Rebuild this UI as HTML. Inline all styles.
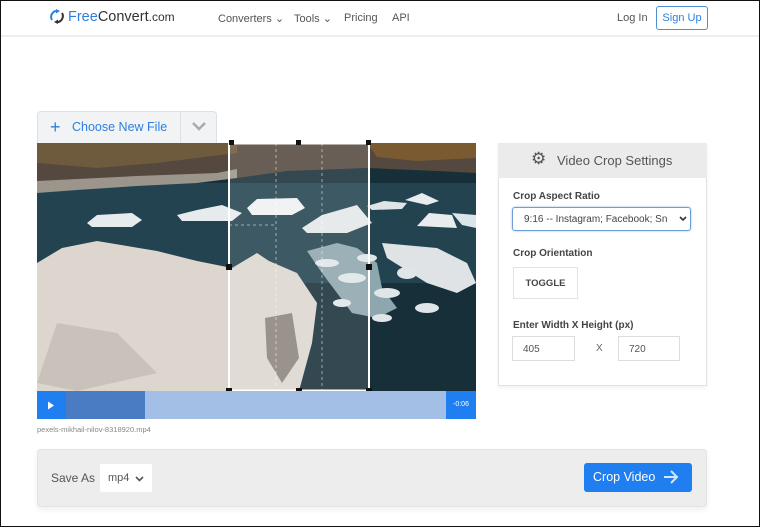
<!DOCTYPE html>
<html><head><meta charset="utf-8"><style>
*{box-sizing:border-box;margin:0;padding:0}
body{width:760px;height:527px;background:#fff;font-family:"Liberation Sans",Arial,sans-serif;position:relative;overflow:hidden}
.frame{position:absolute;left:0;top:0;width:760px;height:527px;border:1px solid #111;pointer-events:none;z-index:10}
.hdr{position:absolute;left:0;top:0;width:760px;height:37px;border-bottom:2px solid #eceef1;background:#fff}
.a{position:absolute;font-size:11px;color:#555;top:12px}
.abs{position:absolute}
</style></head><body>
<div class="hdr">
 <svg class="abs" style="left:49px;top:8px" width="16" height="17" viewBox="0 0 16 17"><path d="M3 12 A6 6 0 0 1 9 3" fill="none" stroke="#2d7fe0" stroke-width="2"/><path d="M7 1 L11 3 L7 5.5Z" fill="#2d7fe0"/><path d="M13 5 A6 6 0 0 1 7 14" fill="none" stroke="#333" stroke-width="2"/><path d="M9 16 L5 14 L9 11.5Z" fill="#333"/></svg>
 <div class="abs" style="left:68px;top:9px;font-size:14.5px;color:#333"><span style="color:#2d7fe0">Free</span>Convert<span style="font-size:12px">.com</span></div>
 <div class="a" style="left:218px">Converters ⌄</div>
 <div class="a" style="left:294px">Tools ⌄</div>
 <div class="a" style="left:344px">Pricing</div>
 <div class="a" style="left:392px">API</div>
 <div class="a" style="left:617px">Log In</div>
 <div class="abs" style="left:656px;top:6px;width:52px;height:24px;border:1px solid #4d8fd6;border-radius:3px;color:#2d7fe0;font-size:11px;text-align:center;line-height:22px">Sign Up</div>
</div>

<div class="abs" style="left:37px;top:111px;width:180px;height:33px;background:#f1f3f5;border:1px solid #dde1e5;border-bottom:none;border-radius:4px 4px 0 0"></div>
<div class="abs" style="left:180px;top:111px;width:1px;height:32px;background:#dde1e5"></div>
<div class="abs" style="left:50px;top:117px;font-size:18px;color:#2d7fe0">+</div>
<div class="abs" style="left:72px;top:120px;font-size:12.5px;color:#2d7fe0">Choose New File</div>
<svg class="abs" style="left:192px;top:122px" width="14" height="9"><path d="M1 1 L7 7 L13 1" fill="none" stroke="#aaa" stroke-width="2.5"/></svg>

<svg class="abs" style="left:37px;top:143px" width="439" height="248" viewBox="0 0 439 248">
 <rect width="439" height="248" fill="#172f39"/>
 <rect width="439" height="100" y="40" fill="#22434f"/>
 <path d="M0 0H439V30L400 28 330 25 250 28 200 35 160 38 100 42 40 45 0 48Z" fill="#54483f"/>
 <path d="M0 0H200V10L120 20 60 25 0 20Z" fill="#6e5a3c"/>
 <path d="M330 0H439V15L380 18 340 14Z" fill="#7a5a30"/>
 <path d="M0 38 L100 33 180 30 200 26 200 35 160 40 100 43 40 47 0 50Z" fill="#9b958c"/>
 <path d="M50 80 L60 72 95 70 105 77 95 84 55 84Z" fill="#e6ebed"/>
 <path d="M140 72 L160 67 185 62 205 70 195 78 145 78Z" fill="#e6ebed"/>
 <path d="M210 65 L220 56 260 55 268 65 255 72 215 72Z" fill="#eef1f3"/>
 <path d="M265 85 L285 72 320 62 335 80 310 90 270 90Z" fill="#e3e7e9"/>
 <path d="M330 63 L347 58 370 60 365 66 335 67Z" fill="#dfe4e7"/>
 <path d="M368 57 L385 50 402 58 390 62Z" fill="#e8ecee"/>
 <path d="M380 83 L392 70 415 72 420 85Z" fill="#e8ecee"/>
 <path d="M415 70 L439 72 439 85 425 82Z" fill="#dbe4ea"/>
 <path d="M345 100 L400 105 430 120 439 140 420 150 390 140 350 115Z" fill="#dfe3e5"/>
 <path d="M270 108 L300 100 320 105 340 120 345 145 360 165 340 175 315 170 300 150 285 130Z" fill="#8ea6ae"/>
 <g fill="#e0e6e8"><ellipse cx="290" cy="120" rx="12" ry="4"/><ellipse cx="315" cy="135" rx="14" ry="5"/><ellipse cx="330" cy="115" rx="10" ry="4"/><ellipse cx="350" cy="150" rx="13" ry="5"/><ellipse cx="305" cy="160" rx="9" ry="4"/><ellipse cx="370" cy="130" rx="10" ry="6"/><ellipse cx="345" cy="175" rx="10" ry="4"/><ellipse cx="390" cy="165" rx="12" ry="5"/></g>
 <path d="M0 120 L25 105 60 98 120 108 160 118 195 125 220 110 232 118 260 130 280 160 275 200 262 248 0 248Z" fill="#dcd6cf"/>
 <path d="M20 180 L80 190 120 230 40 248 0 240Z" fill="#c9c2ba"/>
 <path d="M228 175 L255 170 262 215 245 240 230 215Z" fill="#8c847c"/>
 <rect x="192" y="0" width="140" height="248" fill="#fff" opacity="0.12"/>
 <path d="M239 0V248M285 0V248M192 82H239" stroke="#fff" stroke-dasharray="3 3" opacity="0.5" fill="none"/>
 <rect x="192" y="0.5" width="140" height="247" fill="none" stroke="#fff" stroke-width="2"/>
 <g fill="#111"><rect x="189" y="121" width="6" height="6"/><rect x="329" y="121" width="6" height="6"/><rect x="189" y="245" width="6" height="6"/><rect x="259" y="245" width="6" height="6"/><rect x="329" y="245" width="6" height="6"/></g>
</svg>
<div class="abs" style="left:229px;top:140px;width:5px;height:5px;background:#111"></div>
<div class="abs" style="left:296px;top:140px;width:5px;height:5px;background:#111"></div>
<div class="abs" style="left:366px;top:140px;width:5px;height:5px;background:#111"></div>

<div class="abs" style="left:37px;top:391px;width:439px;height:28px;background:#a3bfe6"></div>
<div class="abs" style="left:37px;top:391px;width:29px;height:28px;background:#1f7ef0"></div>
<div class="abs" style="left:66px;top:391px;width:79px;height:28px;background:#4a7cc4"></div>
<div class="abs" style="left:446px;top:391px;width:30px;height:28px;background:#1f7ef0;color:#fff;font-size:7px;text-align:center;line-height:28px">-0:06</div>
<svg class="abs" style="left:47px;top:401px" width="8" height="9"><path d="M1 0.5 L7 4.5 L1 8.5Z" fill="#fff"/></svg>
<div class="abs" style="left:37px;top:425px;font-size:7.5px;color:#888">pexels-mikhail-nilov-8318920.mp4</div>

<div class="abs" style="left:498px;top:143px;width:209px;height:243px;background:#fff;border:1px solid #e0e3e6;box-shadow:0 2px 4px rgba(0,0,0,.06)"></div>
<div class="abs" style="left:498px;top:143px;width:209px;height:35px;background:#ebebeb"></div>
<div class="abs" style="left:531px;top:149px;font-size:17px;color:#555">⚙</div>
<div class="abs" style="left:557px;top:153px;font-size:13px;color:#555">Video Crop Settings</div>
<div class="abs" style="left:513px;top:191px;font-size:10px;font-weight:bold;color:#444">Crop Aspect Ratio</div>
<div class="abs" style="left:512px;top:207px;width:179px;height:24px;border:1px solid #6c9fd8;border-radius:3px;font-size:10px;color:#444;padding:6px 0 0 11px;box-shadow:0 0 2px #9cc0ea">9:16 -- Instagram; Facebook; Sn</div>
<svg class="abs" style="left:679px;top:216px" width="8" height="6"><path d="M1 1 L4 4 L7 1" fill="none" stroke="#333" stroke-width="1.6"/></svg>
<div class="abs" style="left:513px;top:248px;font-size:10px;font-weight:bold;color:#444">Crop Orientation</div>
<div class="abs" style="left:513px;top:267px;width:65px;height:32px;border:1px solid #e3e3e3;font-size:9.5px;font-weight:bold;color:#444;text-align:center;line-height:31px">TOGGLE</div>
<div class="abs" style="left:513px;top:320px;font-size:10px;font-weight:bold;color:#444">Enter Width X Height (px)</div>
<div class="abs" style="left:512px;top:336px;width:63px;height:25px;border:1px solid #ddd;font-size:10px;color:#555;padding:7px 0 0 10px">405</div>
<div class="abs" style="left:596px;top:343px;font-size:10px;color:#666">X</div>
<div class="abs" style="left:618px;top:336px;width:62px;height:25px;border:1px solid #ddd;font-size:10px;color:#555;padding:7px 0 0 10px">720</div>

<div class="abs" style="left:37px;top:449px;width:670px;height:58px;background:#ededed;border:1px solid #e4e4e4;border-radius:3px;box-shadow:0 3px 6px rgba(0,0,0,.06)"></div>
<div class="abs" style="left:51px;top:471px;font-size:12px;color:#555">Save As</div>
<div class="abs" style="left:100px;top:464px;width:52px;height:28px;background:#fff;border-radius:2px;font-size:11px;color:#555;padding:8px 0 0 8px">mp4</div>
<svg class="abs" style="left:135px;top:476px" width="9" height="6"><path d="M1 1 L4.5 4.5 L8 1" fill="none" stroke="#555" stroke-width="1.6"/></svg>
<div class="abs" style="left:584px;top:463px;width:108px;height:29px;background:#1f7ef0;border-radius:3px;color:#fff;font-size:12.5px;padding:7px 0 0 9px">Crop Video</div>
<svg class="abs" style="left:663px;top:470px" width="16" height="14"><path d="M1 7H14M8 1L14 7 8 13" fill="none" stroke="#d6e6fb" stroke-width="2"/></svg>
<div class="frame"></div>
</body></html>
